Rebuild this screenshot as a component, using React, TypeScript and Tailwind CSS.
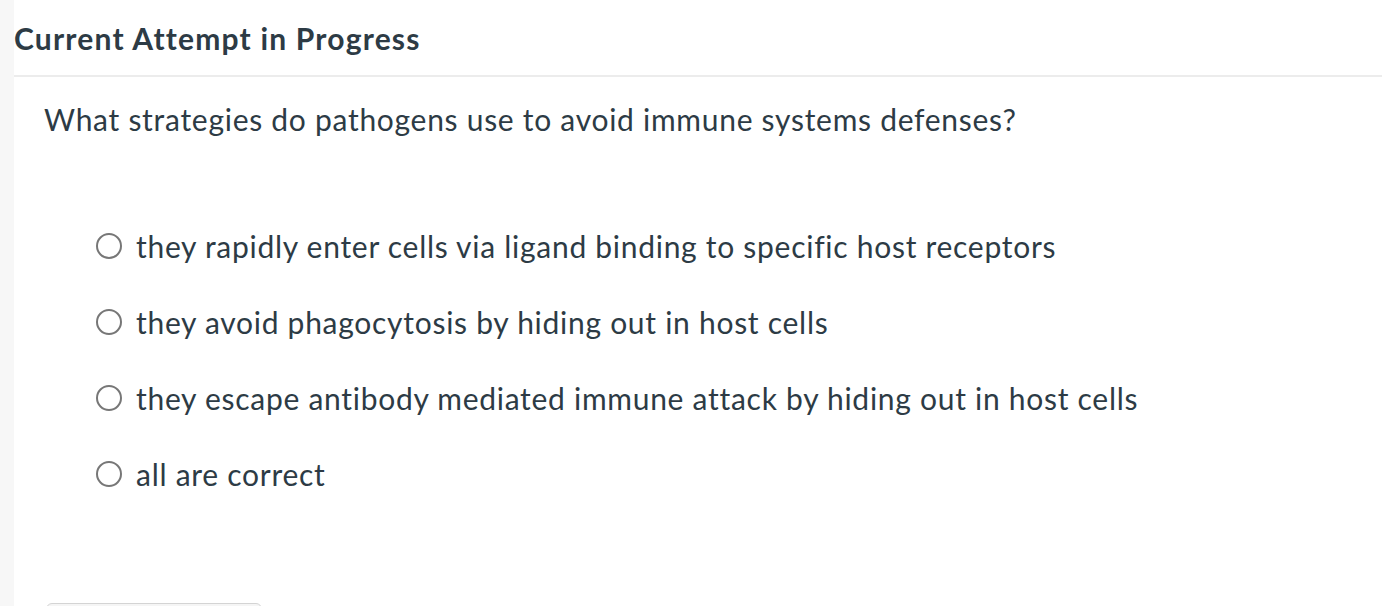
const options = [
  "they rapidly enter cells via ligand binding to specific host receptors",
  "they avoid phagocytosis by hiding out in host cells",
  "they escape antibody mediated immune attack by hiding out in host cells",
  "all are correct",
];

const App = () => {
  return (
    <div className="flex h-[606px] w-full overflow-hidden bg-white font-['Lato',sans-serif] text-[#2d3b45]">
      <div className="w-[14px] shrink-0 bg-[#f7f7f7]"></div>
      <main className="flex-1">
        <div className="border-b-2 border-[#ececec] pt-[19px] pb-[18px]">
          <h2 className="text-[30px] font-bold leading-[38px] tracking-[1.2px]">Current Attempt in Progress</h2>
        </div>
        <div className="pl-[30px] pt-[22px]">
          <p className="text-[30px] leading-[40px] tracking-[0.72px]">What strategies do pathogens use to avoid immune systems defenses?</p>
        </div>
        <div className="mt-[87px] flex flex-col gap-[36px] pl-[82px]">
          {options.map((o) => (
            <label key={o} className="flex items-center gap-[14px] text-[30px] leading-[40px] tracking-[0.72px]">
              <span className="h-[26px] w-[26px] shrink-0 rounded-full border-2 border-[#777]"></span>
              <span>{o}</span>
            </label>
          ))}
        </div>
        <div className="mt-[109px] ml-[32px] h-[40px] w-[216px] rounded-md border border-[#d4d4d4] bg-[#f5f5f5]"></div>
      </main>
    </div>
  );
};

export default App;
